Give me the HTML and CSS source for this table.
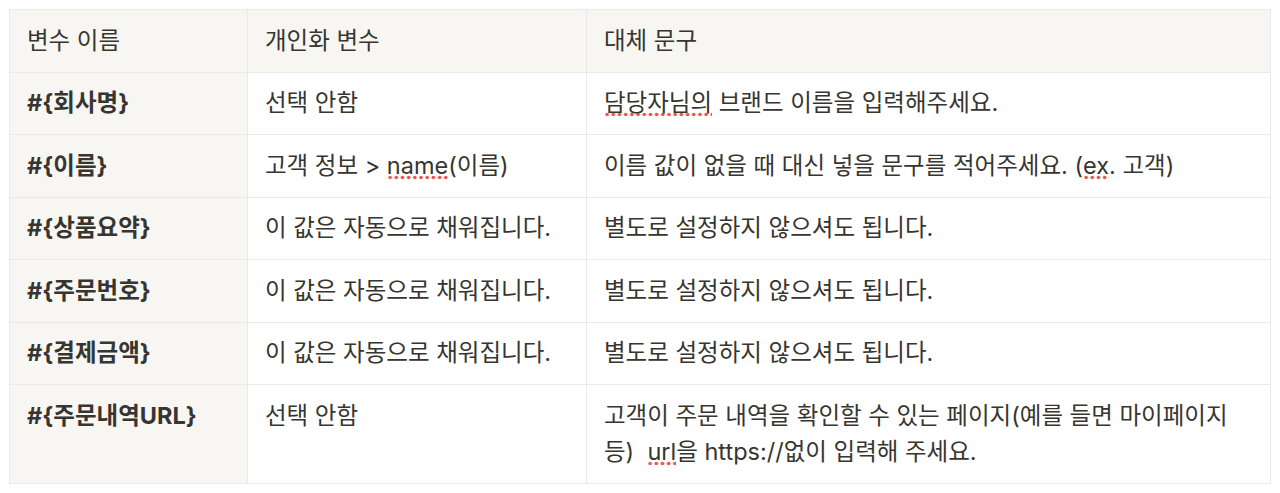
FILE: index.html
```html
<!DOCTYPE html>
<html lang="ko">
<head>
<meta charset="utf-8">
<link rel="stylesheet" href="styles.css">
</head>
<body>
<div class="wrap">
<table class="vars">
  <colgroup>
    <col class="c1">
    <col class="c2">
    <col class="c3">
  </colgroup>
  <thead>
    <tr>
      <th class="key">변수 이름</th>
      <th>개인화 변수</th>
      <th>대체 문구</th>
    </tr>
  </thead>
  <tbody>
    <tr>
      <td class="key">#{회사명}</td>
      <td>선택 안함</td>
      <td><span class="spell">담당자님의</span> 브랜드 이름을 입력해주세요.</td>
    </tr>
    <tr>
      <td class="key">#{이름}</td>
      <td>고객 정보 &gt; <span class="spell">name</span>(이름)</td>
      <td>이름 값이 없을 때 대신 넣을 문구를 적어주세요. (<span class="spell">ex</span>. 고객)</td>
    </tr>
    <tr>
      <td class="key">#{상품요약}</td>
      <td>이 값은 자동으로 채워집니다.</td>
      <td>별도로 설정하지 않으셔도 됩니다.</td>
    </tr>
    <tr>
      <td class="key">#{주문번호}</td>
      <td>이 값은 자동으로 채워집니다.</td>
      <td>별도로 설정하지 않으셔도 됩니다.</td>
    </tr>
    <tr>
      <td class="key">#{결제금액}</td>
      <td>이 값은 자동으로 채워집니다.</td>
      <td>별도로 설정하지 않으셔도 됩니다.</td>
    </tr>
    <tr>
      <td class="key">#{주문내역URL}</td>
      <td>선택 안함</td>
      <td>고객이 주문 내역을 확인할 수 있는 페이지(예를 들면 마이페이지 등)&nbsp; <span class="spell">url</span>을 https://없이 입력해 주세요.</td>
    </tr>
  </tbody>
</table>
</div>
</body>
</html>
```
FILE: styles.css
```css
html, body {
  margin: 0;
  padding: 0;
  background: #ffffff;
}

.wrap {
  padding: 9px 9px;
}

.vars {
  width: 1262px;
  border-collapse: collapse;
  table-layout: fixed;
  font-family: "Inter", "Noto Sans CJK KR", sans-serif;
  font-size: 23.5px;
  line-height: 36px;
  color: #37352f;
}

.c1 { width: 238px; }
.c2 { width: 339px; }

.vars th,
.vars td {
  border: 1px solid #e9e9e7;
  padding: 12.5px 14px 13px 17px;
  text-align: left;
  vertical-align: top;
  font-weight: 400;
}

.vars thead th {
  background: #f7f6f3;
}

.vars .key {
  background: #f7f6f3;
}

.vars tbody .key {
  font-weight: 700;
}

.spell {
  background-image: radial-gradient(circle, #eb5a50 1.6px, transparent 2.1px);
  background-size: 6.2px 5px;
  background-repeat: repeat-x;
  background-position: 0 100%;
}
```
